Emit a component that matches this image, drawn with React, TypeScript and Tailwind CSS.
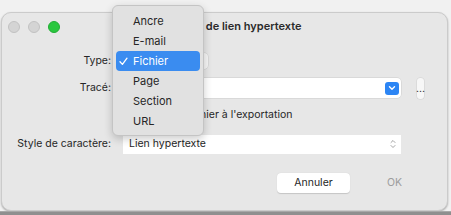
import React from 'react';

const items = ['Ancre', 'E-mail', 'Fichier', 'Page', 'Section', 'URL'];

const Label = ({ children }: { children: React.ReactNode }) => (
  <div className="w-[110px] shrink-0 text-right pr-[1px] text-[#262626]">{children}</div>
);

const App = () => {
  return (
    <div
      className="relative flex flex-col w-[451px] h-[215px] overflow-hidden bg-[#f1f1f1] text-[10.5px]"
      style={{ fontFamily: 'Inter, "Noto Sans", sans-serif' }}
    >
      <div className="pt-[12px] pl-[1px]">
        {/* fenêtre */}
        <div className="w-[447px] h-[199px] rounded-[10px] bg-[#e7e7e7] border border-[#cbcbcb] shadow-[0_1px_2px_rgba(0,0,0,0.3)]">
          {/* barre de titre */}
          <div className="relative flex items-center h-[27px] px-[6px]">
            <div className="flex gap-[8px]">
              <span className="w-[12px] h-[12px] rounded-full bg-[#d4d4d4] border border-[#c2c2c2]" />
              <span className="w-[12px] h-[12px] rounded-full bg-[#d4d4d4] border border-[#c2c2c2]" />
              <span className="w-[12px] h-[12px] rounded-full bg-[#2ac73f] border border-[#22ad35]" />
            </div>
            <div className="absolute inset-0 flex items-center justify-center font-semibold text-[#2a2a2a] text-[11px] pl-[14px]">
              Options de lien hypertexte
            </div>
          </div>

          <div className="flex flex-col">
            {/* Type */}
            <div className="flex items-center h-[20px] mt-[11px]">
              <Label>Type:</Label>
              <div className="ml-[10px] w-[86px] h-[16px] rounded-[4px] bg-[#f6f6f6] shadow-[0_0_0_0.5px_rgba(0,0,0,0.12)]" />
            </div>

            {/* Tracé */}
            <div className="flex items-center h-[20px] mt-[7px]">
              <Label>Tracé:</Label>
              <div className="ml-[1px] w-[288px] h-[20px] rounded-[4px] bg-white shadow-[0_0_0_0.5px_rgba(0,0,0,0.12)] flex items-center justify-end pr-[2px]">
                <div className="w-[14px] h-[13px] rounded-[3px] bg-[#2c85f4] flex items-center justify-center">
                  <svg width="8" height="6" viewBox="0 0 8 6" fill="none">
                    <path d="M1.5 1.8 L4 4.2 L6.5 1.8" stroke="white" strokeWidth="1.4" strokeLinecap="round" strokeLinejoin="round" />
                  </svg>
                </div>
              </div>
              <div className="ml-[16px] w-[7px] h-[21px] rounded-[3px] bg-[#f7f7f7] shadow-[0_0_0_0.5px_rgba(0,0,0,0.1)] flex items-end justify-center pb-[4px] text-[#333] leading-none">
                <span className="-mx-[3px]">...</span>
              </div>
            </div>

            {/* case à cocher */}
            <div className="flex items-center h-[20px] mt-[7px] pl-[119px]">
              <div className="w-[13px] h-[13px] rounded-[3px] bg-white shadow-[0_0_0_0.5px_rgba(0,0,0,0.25)]" />
              <span className="ml-[6px] text-[#262626]">Copier le fichier à l'exportation</span>
            </div>

            {/* Style de caractère */}
            <div className="flex items-center h-[20px] mt-[9px]">
              <Label>Style de caractère:</Label>
              <div className="ml-[11px] w-[278px] h-[19px] bg-white flex items-center justify-between pl-[6px] pr-[5px] text-[#262626]">
                <span>Lien hypertexte</span>
                <svg width="6" height="10" viewBox="0 0 6 10" fill="none">
                  <path d="M1 3.5 L3 1.5 L5 3.5 M1 6.5 L3 8.5 L5 6.5" stroke="#9a9a9a" strokeWidth="0.9" strokeLinecap="round" strokeLinejoin="round" />
                </svg>
              </div>
            </div>

            {/* boutons */}
            <div className="flex items-center h-[20px] mt-[19px] pl-[275px]">
              <div className="w-[73px] h-[20px] rounded-[4px] bg-white shadow-[0_0.5px_1px_rgba(0,0,0,0.15)] flex items-center justify-center text-[#262626]">
                Annuler
              </div>
              <div className="ml-[37px] text-[#9d9d9d]">OK</div>
            </div>
          </div>
        </div>
      </div>
      <div className="flex-1 bg-[#8f8f8f] border-t border-[#a8a8a8]" />

      {/* menu déroulant */}
      <div className="absolute left-[112px] top-[5px] w-[92px] h-[131px] rounded-[6px] bg-[#e1e1e1] border border-[#c4c4c4] shadow-[0_3px_8px_rgba(0,0,0,0.2)] pt-[5px] px-[3px]">
        {items.map((it) => {
          const on = it === 'Fichier';
          return (
            <div
              key={it}
              className={`relative flex items-center h-[20px] rounded-[4px] pl-[17px] ${on ? 'bg-[#3a8cf0] text-white' : 'text-[#262626]'}`}
            >
              {on && (
                <svg className="absolute left-[3px] top-[6px]" width="9" height="9" viewBox="0 0 9 9" fill="none">
                  <path d="M1 4.8 L3.4 7.4 L8 1.2" stroke="white" strokeWidth="1.3" strokeLinecap="round" strokeLinejoin="round" />
                </svg>
              )}
              <span className="text-[11px]">{it}</span>
            </div>
          );
        })}
      </div>
    </div>
  );
};

export default App;
